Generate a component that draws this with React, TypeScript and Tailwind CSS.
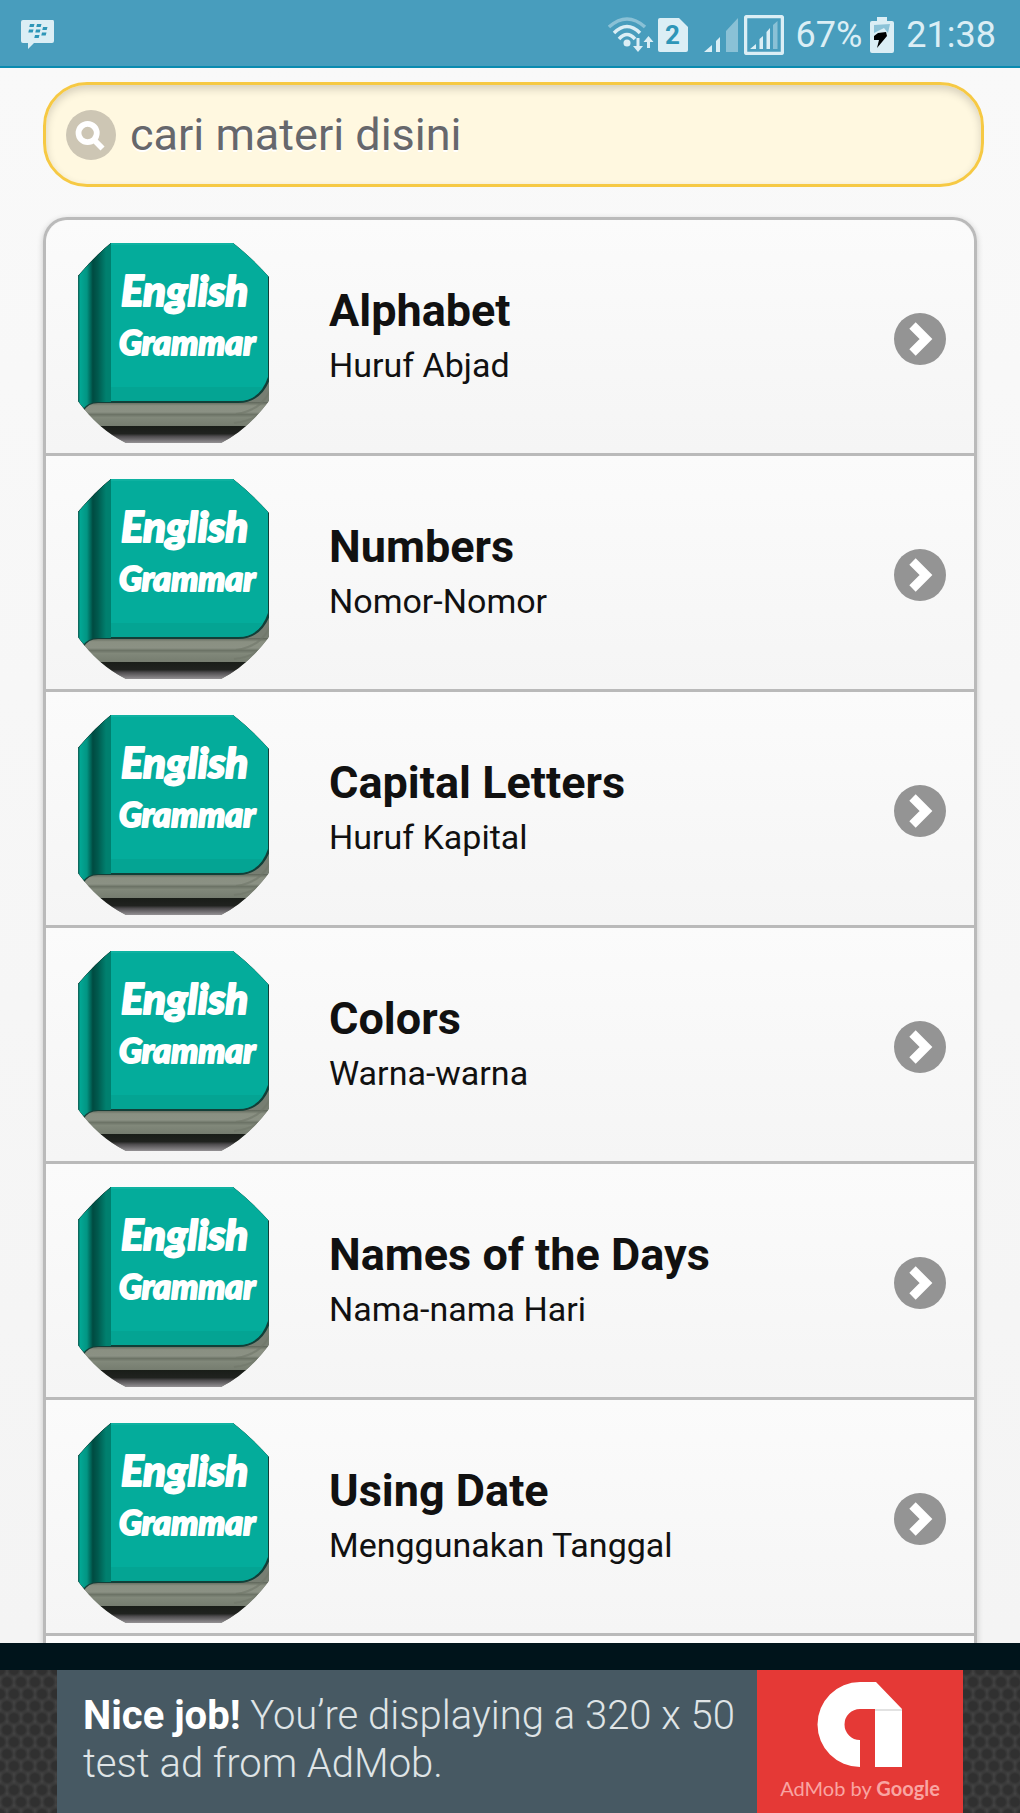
import { useState } from "react";

const lessons = [
  { title: "Alphabet", subtitle: "Huruf Abjad" },
  { title: "Numbers", subtitle: "Nomor-Nomor" },
  { title: "Capital Letters", subtitle: "Huruf Kapital" },
  { title: "Colors", subtitle: "Warna-warna" },
  { title: "Names of the Days", subtitle: "Nama-nama Hari" },
  { title: "Using Date", subtitle: "Menggunakan Tanggal" },
];

function ChatIcon() {
  return (
    <svg width="34" height="30" viewBox="0 0 34 30" aria-hidden="true">
      <path d="M2 0H32Q33 0 33 2V21Q33 23 31 23H13L7 29V23H2Q0 23 0 21V2Q0 0 2 0Z" fill="#dbeef5" />
      <path
        d="M9 4h4.500l-.8 3H8.300zM16 4h4.500l-.8 3H15.300zM8 9.500h4.500l-.8 3H7.300zM15 9.500h4.500l-.8 3H14.300zM22 7h4.500l-.8 3H21.300zM21 12.500h4.500l-.8 3H20.300zM14 15h4.500l-.8 3H13.300z"
        fill="#2e96b8"
      />
    </svg>
  );
}

function WifiIcon() {
  return (
    <svg width="46" height="36" viewBox="0 0 46 36" aria-hidden="true">
      <g fill="none" stroke="#dbeef5" strokeWidth="3.500">
        <path d="M1 10Q19-6 37 10" opacity=".45" />
        <path d="M6 16Q19 3 32 16" />
        <path d="M11 22Q19 13 27 22" />
      </g>
      <circle cx="19" cy="26" r="3.500" fill="#dbeef5" />
      <path d="M28.500 21h3v8h3.500l-5 6-5-6h3.500zM39 31h3v-6h3.500l-5-6-5 6H39z" fill="#dbeef5" />
    </svg>
  );
}

function SimIcon() {
  return (
    <span className="relative flex h-[34px] w-[30px] items-center justify-center text-[26px] leading-none font-bold text-[#2e96b8]">
      <svg className="absolute inset-0" width="30" height="34" viewBox="0 0 30 34" aria-hidden="true">
        <path d="M2 0H21L30 9V32Q30 34 28 34H2Q0 34 0 32V2Q0 0 2 0Z" fill="#dbeef5" />
      </svg>
      <span className="relative">2</span>
    </span>
  );
}

function SignalIcon() {
  return (
    <svg width="34" height="34" viewBox="0 0 34 34" aria-hidden="true">
      <path d="M0 34L8 27V34ZM12 23L16 19V34H12Z" fill="#dbeef5" />
      <path d="M22 13L34 0V34H22Z" fill="#dbeef5" opacity=".45" />
    </svg>
  );
}

function BoxedSignalIcon() {
  return (
    <svg width="40" height="40" viewBox="0 0 40 40" aria-hidden="true">
      <rect x="1.500" y="1.500" width="37" height="37" rx="2" fill="none" stroke="#dbeef5" strokeWidth="3.500" />
      <path d="M6 34L12 29V34ZM15.500 24L19 21V34H15.500ZM22.500 17L26 13V34H22.500Z" fill="#dbeef5" />
      <path d="M29 10L33.500 6V34H29Z" fill="#dbeef5" opacity=".45" />
    </svg>
  );
}

function BatteryIcon() {
  return (
    <svg width="24" height="36" viewBox="0 0 24 36" aria-hidden="true">
      <path d="M7 0H17V4H22Q24 4 24 6V34Q24 36 22 36H2Q0 36 0 34V6Q0 4 2 4H7Z" fill="#dbeef5" />
      <path d="M4 8L20 7L18 16L14 11L4 16Z" fill="#8cc3d8" />
      <path d="M4 19L8 16L16 15L17 19L7 31L9 23H4Z" fill="#000" />
    </svg>
  );
}

function BookCover() {
  return (
    <svg viewBox="0 0 192 200" className="h-[200px] w-[192px] shrink-0" role="img" aria-label="English Grammar">
      <defs>
        <clipPath id="cover-clip">
          <path d="M33 0H155Q174 15 191 34V158Q170 186 143 200H48Q20 186 0 158V33Q17 13 33 0Z" />
        </clipPath>
        <linearGradient id="spine">
          <stop offset="0" stopColor="#12584f" />
          <stop offset=".07" stopColor="#02a794" />
          <stop offset=".27" stopColor="#029583" />
          <stop offset=".45" stopColor="#004b41" />
          <stop offset=".6" stopColor="#005a4e" />
          <stop offset=".85" stopColor="#00806f" />
          <stop offset="1" stopColor="#00806f" />
        </linearGradient>
        <linearGradient id="pages" x2="0" y2="1">
          <stop offset="0" stopColor="#5f665a" />
          <stop offset=".15" stopColor="#8a9082" />
          <stop offset=".4" stopColor="#8b9184" />
          <stop offset=".5" stopColor="#6c7366" />
          <stop offset=".62" stopColor="#81887a" />
          <stop offset="1" stopColor="#747b6e" />
        </linearGradient>
        <linearGradient id="base" x2="0" y2="1">
          <stop offset="0" stopColor="#191d18" />
          <stop offset=".45" stopColor="#20221f" />
          <stop offset=".6" stopColor="#4c4a4c" />
          <stop offset="1" stopColor="#949194" />
        </linearGradient>
      </defs>
      <g clipPath="url(#cover-clip)">
        <rect width="192" height="200" fill="#777e72" />
        <rect y="159" width="192" height="25" fill="url(#pages)" />
        <path d="M158 171Q182 168 192 148M156 180Q180 178 192 160" fill="none" stroke="#6f7669" strokeWidth="2" opacity=".6" />
        <rect y="183" width="192" height="17" fill="url(#base)" />
        <path d="M0 0H192V136Q183 160 160 160H20Q10 160 6 168L0 158Z" fill="#123f38" />
        <path d="M32 0H190V134Q182 158 160 158H32Z" fill="#04ac9b" />
        <path d="M32 144H185Q176 158 160 158H32Z" fill="#049c8c" opacity=".5" />
        <path d="M0 0H33V159H18Q10 160 6 165L0 160Z" fill="url(#spine)" />
        <path d="M0 33Q17 13 33 0H27L0 27Z" fill="#111" />
        <path d="M33 1H156" fill="none" stroke="#2bc2b2" strokeWidth="1" opacity=".6" />
        <g fill="#fff" stroke="#fff" strokeWidth="2" strokeLinejoin="round" className="font-[Lato] font-black italic">
          <text x="43" y="63" className="text-[42px]">
            English
          </text>
          <text x="41" y="112" className="text-[34px]">
            Grammar
          </text>
        </g>
      </g>
    </svg>
  );
}

function ArrowIcon() {
  return (
    <svg width="52" height="52" viewBox="0 0 52 52" className="shrink-0" aria-hidden="true">
      <circle cx="26" cy="26" r="26" fill="#949494" />
      <path d="M18.500 12.500L32 26L18.500 39.500" fill="none" stroke="#fff" strokeWidth="9" />
    </svg>
  );
}

function AdLogo() {
  return (
    <svg width="86" height="86" viewBox="0 0 86 86" aria-hidden="true">
      <path d="M43 0H59L85 27V85H58V27H43A15 15 0 0 0 43 58V85A42.500 42.500 0 0 1 43 0Z" fill="#fff" />
      <path d="M58 27H85V29H58Z" fill="#e2e2e2" />
    </svg>
  );
}

export default function App() {
  const [query, setQuery] = useState("");

  return (
    <div className="flex h-dvh flex-col overflow-hidden bg-[#f8f8f8] font-[Roboto,sans-serif] text-[#111]">
      <header className="flex h-[68px] shrink-0 items-center border-b-2 border-[#0a8bb0] bg-[#489dbd] pt-1 pr-6 pl-[21px] text-4xl text-[#dbeef5]">
        <ChatIcon />
        <div className="ml-auto flex items-center">
          <WifiIcon />
          <span className="ml-1">
            <SimIcon />
          </span>
          <span className="ml-4">
            <SignalIcon />
          </span>
          <span className="ml-1.5">
            <BoxedSignalIcon />
          </span>
          <span className="ml-3">67%</span>
          <span className="ml-2">
            <BatteryIcon />
          </span>
          <time className="ml-3">21:38</time>
        </div>
      </header>

      <main className="min-h-0 flex-1 overflow-hidden bg-linear-to-b from-[#f9f9f9] to-[#f4f4f4] px-[43px] pt-3.5">
        <label className="-mr-[7px] flex h-[105px] items-center gap-3.5 rounded-[44px] border-3 border-[#f6c944] bg-[#fff8e0] px-5 shadow-[inset_0_4px_8px_rgba(0,0,0,0.16)]">
          <svg width="50" height="50" viewBox="0 0 52 52" className="shrink-0" aria-hidden="true">
            <circle cx="26" cy="26" r="26" fill="#cdc6b4" />
            <circle cx="22.500" cy="24" r="9.500" fill="none" stroke="#fff" strokeWidth="6" />
            <path d="M29 31L38 40" stroke="#fff" strokeWidth="6" />
          </svg>
          <input
            type="text"
            aria-label="cari materi disini"
            placeholder="cari materi disini"
            value={query}
            onChange={(event) => setQuery(event.target.value)}
            className="min-w-0 flex-1 bg-transparent text-[45px] outline-none text-shadow-[0_2px_0_#ffffff] placeholder:text-[#66676b]"
          />
        </label>

        <ul className="mt-[30px] rounded-t-3xl border-x-3 border-t-3 border-[#bababa] shadow-[0_2px_6px_rgba(0,0,0,0.2)]">
          {lessons.map((lesson) => (
            <li key={lesson.title} className="border-b-3 border-[#bababa] bg-linear-to-b from-[#fbfbfb] to-[#f5f5f5] first:rounded-t-3xl">
              <a href="#" className="flex h-[233px] items-center pt-1 pr-7 pl-8">
                <span className="mt-2 shrink-0">
                  <BookCover />
                </span>
                <span className="ml-[59px] flex min-w-0 flex-1 flex-col">
                  <span className="text-[45px] leading-[52px] font-bold">{lesson.title}</span>
                  <span className="text-[34px] leading-[56px]">{lesson.subtitle}</span>
                </span>
                <ArrowIcon />
              </a>
            </li>
          ))}
          <li className="h-6 bg-[#fcfcfc]" />
        </ul>
      </main>

      <footer className="shrink-0 border-t-[27px] border-[#00141b] bg-[#474747] bg-[radial-gradient(circle,#303030_30%,transparent_60%),radial-gradient(circle,#303030_30%,transparent_60%)] bg-size-[14px_24px] bg-position-[0_0,7px_12px] px-[57px]">
        <div className="flex h-[143px]">
          <p className="min-w-0 flex-1 bg-[#475963] pt-[22px] pl-[26px] text-[40px] leading-12 font-light text-[#dfe4e6]">
            <strong className="font-bold text-white">Nice job!</strong> You’re displaying a 320 x 50 test ad from AdMob.
          </p>
          <div className="flex w-[206px] shrink-0 flex-col items-center bg-[#e53936] pt-3">
            <AdLogo />
            <span className="mt-1.5 font-[Lato] text-xl text-[#f9a5a2]">
              AdMob by <span className="font-bold">Google</span>
            </span>
          </div>
        </div>
      </footer>
    </div>
  );
}
